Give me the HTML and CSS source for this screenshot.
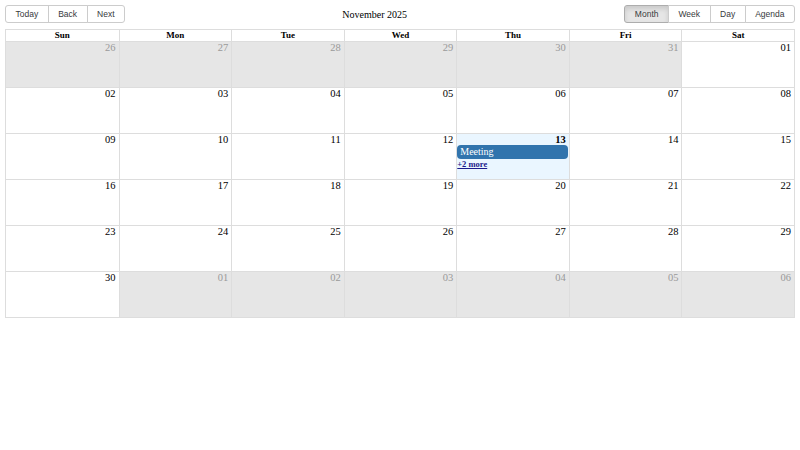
FILE: index.html
```html
<!DOCTYPE html>
<html>
<head>
<meta charset="utf-8">
<link rel="stylesheet" href="styles.css">
</head>
<body>
<div class="toolbar">
  <div class="btn-group">
    <button class="btn">Today</button><button class="btn">Back</button><button class="btn">Next</button>
  </div>
  <div class="title">November 2025</div>
  <div class="btn-group">
    <button class="btn active">Month</button><button class="btn">Week</button><button class="btn">Day</button><button class="btn">Agenda</button>
  </div>
</div>
<div class="month">
  <div class="head-row">
    <div class="head">Sun</div><div class="head">Mon</div><div class="head">Tue</div><div class="head">Wed</div><div class="head">Thu</div><div class="head">Fri</div><div class="head">Sat</div>
  </div>
  <div class="week">
    <div class="cell off"><span class="date">26</span></div>
    <div class="cell off"><span class="date">27</span></div>
    <div class="cell off"><span class="date">28</span></div>
    <div class="cell off"><span class="date">29</span></div>
    <div class="cell off"><span class="date">30</span></div>
    <div class="cell off"><span class="date">31</span></div>
    <div class="cell"><span class="date">01</span></div>
  </div>
  <div class="week">
    <div class="cell"><span class="date">02</span></div>
    <div class="cell"><span class="date">03</span></div>
    <div class="cell"><span class="date">04</span></div>
    <div class="cell"><span class="date">05</span></div>
    <div class="cell"><span class="date">06</span></div>
    <div class="cell"><span class="date">07</span></div>
    <div class="cell"><span class="date">08</span></div>
  </div>
  <div class="week">
    <div class="cell"><span class="date">09</span></div>
    <div class="cell"><span class="date">10</span></div>
    <div class="cell"><span class="date">11</span></div>
    <div class="cell"><span class="date">12</span></div>
    <div class="cell today"><span class="date">13</span>
      <div class="event">Meeting</div>
      <a class="more" href="#">+2 more</a>
    </div>
    <div class="cell"><span class="date">14</span></div>
    <div class="cell"><span class="date">15</span></div>
  </div>
  <div class="week">
    <div class="cell"><span class="date">16</span></div>
    <div class="cell"><span class="date">17</span></div>
    <div class="cell"><span class="date">18</span></div>
    <div class="cell"><span class="date">19</span></div>
    <div class="cell"><span class="date">20</span></div>
    <div class="cell"><span class="date">21</span></div>
    <div class="cell"><span class="date">22</span></div>
  </div>
  <div class="week">
    <div class="cell"><span class="date">23</span></div>
    <div class="cell"><span class="date">24</span></div>
    <div class="cell"><span class="date">25</span></div>
    <div class="cell"><span class="date">26</span></div>
    <div class="cell"><span class="date">27</span></div>
    <div class="cell"><span class="date">28</span></div>
    <div class="cell"><span class="date">29</span></div>
  </div>
  <div class="week">
    <div class="cell"><span class="date">30</span></div>
    <div class="cell off"><span class="date">01</span></div>
    <div class="cell off"><span class="date">02</span></div>
    <div class="cell off"><span class="date">03</span></div>
    <div class="cell off"><span class="date">04</span></div>
    <div class="cell off"><span class="date">05</span></div>
    <div class="cell off"><span class="date">06</span></div>
  </div>
</div>
</body>
</html>
```
FILE: styles.css
```css
html, body {
  margin: 0;
  padding: 0;
  background: #fff;
}
body {
  padding: 5px;
  font-family: "Liberation Serif", "Times New Roman", serif;
  font-size: 10.5px;
  color: #000;
}
.toolbar {
  display: flex;
  align-items: center;
  height: 18px;
  margin-bottom: 6px;
}
.btn-group {
  display: flex;
}
.title {
  flex: 1;
  text-align: center;
  font-size: 10px;
}
.btn {
  font-family: "Liberation Sans", Arial, sans-serif;
  font-size: 8.5px;
  color: #373a3c;
  background: #fff;
  border: 1px solid #ccc;
  height: 18px;
  padding: 0 9.5px;
  margin: 0;
  margin-left: -1px;
  line-height: normal;
}
.btn-group .btn:first-child {
  margin-left: 0;
  border-radius: 3px 0 0 3px;
}
.btn-group .btn:last-child {
  border-radius: 0 3px 3px 0;
}
.btn.active {
  background: #e6e6e6;
  border-color: #adadad;
  box-shadow: inset 0 3px 5px rgba(0, 0, 0, 0.125);
}
.month {
  border: 1px solid #ddd;
}
.head-row {
  display: grid;
  grid-template-columns: repeat(7, 1fr);
  height: 11px;
}
.head {
  text-align: center;
  font-weight: bold;
  font-size: 9px;
  line-height: 11px;
  border-left: 1px solid #ddd;
}
.head:first-child {
  border-left: none;
}
.week {
  display: grid;
  grid-template-columns: repeat(7, 1fr);
  height: 45px;
  border-top: 1px solid #ddd;
}
.cell {
  border-left: 1px solid #ddd;
  display: flex;
  flex-direction: column;
  min-width: 0;
}
.cell:first-child {
  border-left: none;
}
.date {
  display: block;
  text-align: right;
  padding-right: 3px;
  line-height: 11px;
  height: 11px;
}
.off {
  background: #e6e6e6;
}
.off .date {
  color: #999;
}
.today {
  background: #eaf6ff;
}
.today .date {
  font-weight: bold;
}
.event {
  background: #3174ad;
  color: #fff;
  border-radius: 4px;
  height: 14px;
  line-height: 14px;
  padding-left: 3px;
  margin-right: 1px;
  font-size: 10px;
}
.more {
  font-weight: bold;
  font-size: 8.5px;
  color: #1a1a8c;
  text-decoration: underline;
  line-height: 11px;
}
```
